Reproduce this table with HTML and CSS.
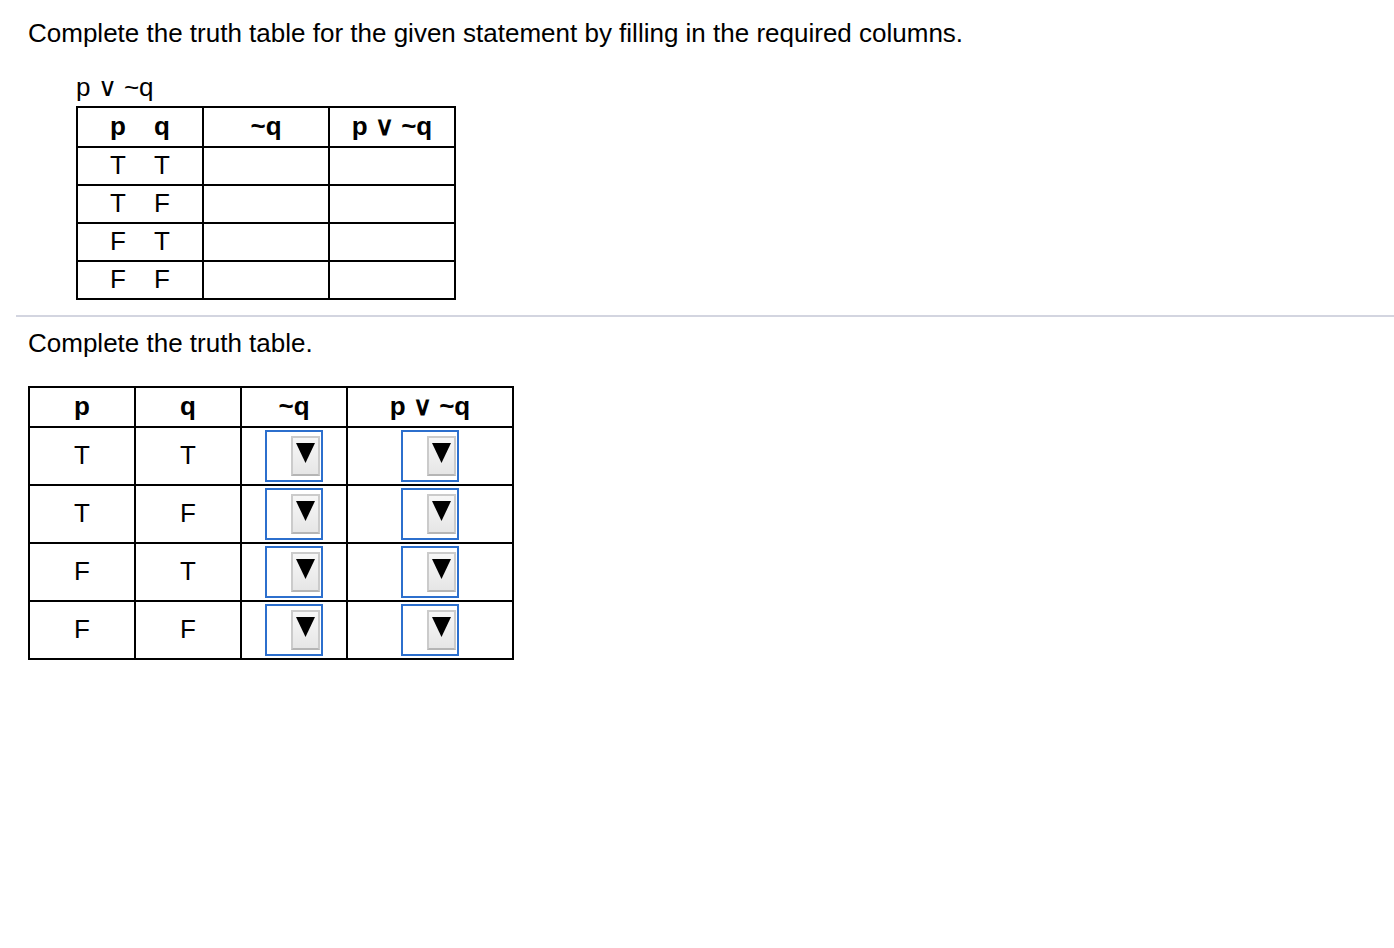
FILE: index.html
```html
<!DOCTYPE html>
<html>
<head>
<meta charset="utf-8">
<link rel="stylesheet" href="styles.css">
</head>
<body>
<div class="page">
  <section class="question">
    <p class="prompt">Complete the truth table for the given statement by filling in the required columns.</p>
    <div class="statement">p ∨ ~q</div>
    <table class="tt given">
      <tr class="head">
        <th><span class="pq"><span>p</span><span>q</span></span></th>
        <th>~q</th>
        <th>p ∨ ~q</th>
      </tr>
      <tr><td><span class="pq"><span>T</span><span>T</span></span></td><td></td><td></td></tr>
      <tr><td><span class="pq"><span>T</span><span>F</span></span></td><td></td><td></td></tr>
      <tr><td><span class="pq"><span>F</span><span>T</span></span></td><td></td><td></td></tr>
      <tr><td><span class="pq"><span>F</span><span>F</span></span></td><td></td><td></td></tr>
    </table>
  </section>
  <hr class="divider">
  <section class="answer">
    <p class="prompt">Complete the truth table.</p>
    <table class="tt work">
      <tr class="head"><th>p</th><th>q</th><th>~q</th><th>p ∨ ~q</th></tr>
      <tr><td>T</td><td>T</td><td class="sel"><span class="dd"><span class="btn"><svg width="19" height="20" viewBox="0 0 19 20"><polygon points="0,0 19,0 9.5,20" fill="#000"/></svg></span></span></td><td class="sel"><span class="dd"><span class="btn"><svg width="19" height="20" viewBox="0 0 19 20"><polygon points="0,0 19,0 9.5,20" fill="#000"/></svg></span></span></td></tr>
      <tr><td>T</td><td>F</td><td class="sel"><span class="dd"><span class="btn"><svg width="19" height="20" viewBox="0 0 19 20"><polygon points="0,0 19,0 9.5,20" fill="#000"/></svg></span></span></td><td class="sel"><span class="dd"><span class="btn"><svg width="19" height="20" viewBox="0 0 19 20"><polygon points="0,0 19,0 9.5,20" fill="#000"/></svg></span></span></td></tr>
      <tr><td>F</td><td>T</td><td class="sel"><span class="dd"><span class="btn"><svg width="19" height="20" viewBox="0 0 19 20"><polygon points="0,0 19,0 9.5,20" fill="#000"/></svg></span></span></td><td class="sel"><span class="dd"><span class="btn"><svg width="19" height="20" viewBox="0 0 19 20"><polygon points="0,0 19,0 9.5,20" fill="#000"/></svg></span></span></td></tr>
      <tr><td>F</td><td>F</td><td class="sel"><span class="dd"><span class="btn"><svg width="19" height="20" viewBox="0 0 19 20"><polygon points="0,0 19,0 9.5,20" fill="#000"/></svg></span></span></td><td class="sel"><span class="dd"><span class="btn"><svg width="19" height="20" viewBox="0 0 19 20"><polygon points="0,0 19,0 9.5,20" fill="#000"/></svg></span></span></td></tr>
    </table>
  </section>
</div>
</body>
</html>
```

FILE: styles.css
```css
html, body {
  margin: 0;
  padding: 0;
  background: #fff;
}
body {
  font-family: "Liberation Sans", Arial, sans-serif;
  font-size: 26px;
  color: #000;
}
.page {
  padding-top: 18px;
}
.prompt {
  margin: 0;
  padding-left: 28px;
  line-height: 30px;
}
.statement {
  margin-top: 24px;
  padding-left: 76px;
  line-height: 30px;
}
.tt {
  border-collapse: collapse;
}
.tt th, .tt td {
  border: 2px solid #000;
  padding: 0 0 3px 0;
  text-align: center;
  vertical-align: middle;
  line-height: 30px;
}
.tt th {
  font-weight: bold;
}
.given {
  margin-left: 76px;
  margin-top: 4px;
}
.given th, .given td {
  width: 124px;
  height: 33px;
}
.given tr.head th {
  height: 35px;
}
.pq {
  display: inline-flex;
  gap: 28px;
  justify-content: center;
}
.pq span {
  width: 16px;
  display: inline-block;
  text-align: center;
}
.divider {
  border: 0;
  height: 2px;
  background: #d3d5e0;
  margin: 15px 0 0 16px;
}
.answer {
  padding-top: 11px;
}
.work {
  margin-left: 28px;
  margin-top: 28px;
}
.work th, .work td {
  width: 104px;
  height: 53px;
}
.work th:last-child, .work td:last-child {
  width: 164px;
}
.work tr.head th {
  height: 35px;
}
.work td.sel {
  padding: 0;
  height: 56px;
}
.dd {
  display: inline-flex;
  box-sizing: border-box;
  width: 58px;
  height: 52px;
  border: 2px solid #2c6fcd;
  background: #fff;
  justify-content: flex-end;
  align-items: center;
  padding-right: 1px;
  vertical-align: middle;
}
.btn {
  box-sizing: border-box;
  width: 29px;
  height: 40px;
  border: 2px solid #cbcbcb;
  border-bottom-color: #b5b5b5;
  background: linear-gradient(#f7f7f7, #e6e6e6);
  display: flex;
  justify-content: center;
  align-items: flex-start;
  padding-top: 5px;
}
.btn svg {
  display: block;
}
```
